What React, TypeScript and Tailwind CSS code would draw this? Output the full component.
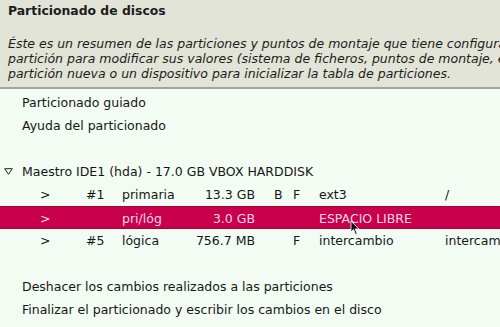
import React from 'react'

const font = { fontFamily: '"DejaVu Sans", Verdana, sans-serif' }

type Part = {
  num: string
  kind: string
  size: string
  b: string
  f: string
  fs: string
  mount: string
  active?: boolean
}

const parts: Part[] = [
  { num: '#1', kind: 'primaria', size: '13.3 GB', b: 'B', f: 'F', fs: 'ext3', mount: '/' },
  { num: '', kind: 'pri/lóg', size: '3.0 GB', b: '', f: '', fs: 'ESPACIO LIBRE', mount: '', active: true },
  { num: '#5', kind: 'lógica', size: '756.7 MB', b: '', f: 'F', fs: 'intercambio', mount: 'intercambio' },
]

function Cursor() {
  return (
    <svg className="absolute left-[350px] top-[13px]" width="10" height="16" viewBox="0 0 10 16">
      <path d="M1 1 L1 12 L3.5 9.5 L5.5 14.5 L7.2 13.8 L5.2 9 L8.8 9 Z" fill="#111" stroke="#fff" strokeWidth="0.8" />
    </svg>
  )
}

function PartRow({ p }: { p: Part }) {
  return (
    <div
      className={
        'relative grid h-[23px] grid-cols-[46px_36px_48px_85px_19px_19px_26px_126px_200px] items-center pl-[40px] ' +
        (p.active ? 'border-y border-[#a3003c] bg-[#c8004c] text-[#f6d6e3]' : '')
      }
    >
      <span>&gt;</span>
      <span>{p.num}</span>
      <span>{p.kind}</span>
      <span className="text-right">{p.size}</span>
      <span />
      <span>{p.b}</span>
      <span>{p.f}</span>
      <span>{p.fs}</span>
      <span>{p.mount}</span>
      {p.active && <Cursor />}
    </div>
  )
}

export default function App() {
  return (
    <div className="h-[327px] w-[500px] overflow-hidden whitespace-nowrap bg-[#f3fcf3] text-[12.5px] text-[#161616]" style={font}>
      <header className="h-[89px] border-b-2 border-[#a2a499] bg-[#e1e4d7] px-[8px] pt-[1px]">
        <h1 className="h-[20px] text-[12.4px] font-bold leading-[20px] text-[#1c1c1c]">Particionado de discos</h1>
        <p className="mt-[15px] italic leading-[15px] text-[#1c1c1c]">
          Éste es un resumen de las particiones y puntos de montaje que tiene configurado actualmente. Seleccione una
          <br />
          partición para modificar sus valores (sistema de ficheros, puntos de montaje, etc.), el espacio libre para crear
          <br />
          partición nueva o un dispositivo para inicializar la tabla de particiones.
        </p>
      </header>

      <div className="pt-[2px] leading-[23px]">
        <div className="h-[23px] pl-[22px]">Particionado guiado</div>
        <div className="h-[23px] pl-[22px]">Ayuda del particionado</div>
        <div className="h-[23px]" />
        <div className="flex h-[23px] items-center gap-[9px] pl-[4px]">
          <svg width="9" height="7" viewBox="0 0 9 7">
            <path d="M0.7 0.7 L8.3 0.7 L4.5 6.3 Z" fill="none" stroke="#222" strokeWidth="1" />
          </svg>
          <span>Maestro IDE1 (hda) - 17.0 GB VBOX HARDDISK</span>
        </div>
        {parts.map((p, i) => (
          <PartRow key={i} p={p} />
        ))}
        <div className="h-[23px]" />
        <div className="h-[23px] pl-[22px]">Deshacer los cambios realizados a las particiones</div>
        <div className="h-[23px] pl-[22px]">Finalizar el particionado y escribir los cambios en el disco</div>
      </div>
    </div>
  )
}
